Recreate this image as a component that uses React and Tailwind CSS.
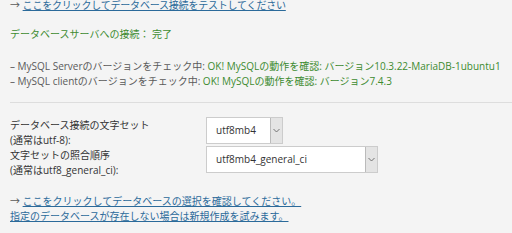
import React from 'react';

const FONT = { fontFamily: '"Open Sans", "Noto Sans CJK JP", sans-serif' };

function Chevron() {
  return (
    <svg width="7" height="5" viewBox="0 0 7 5" fill="none">
      <path d="M0.5 1 L3.5 4 L6.5 1" stroke="#666" strokeWidth="0.9" />
    </svg>
  );
}

function FakeSelect({ value, width }) {
  return (
    <div className={`flex h-[27px] items-stretch border border-[#cccccc] bg-white ${width}`}>
      <div className="flex flex-1 items-center pl-[9px] text-[10px] text-[#333]">{value}</div>
      <div className="flex w-[12px] items-center justify-center border-l border-[#bbbbbb] bg-[#e4e4e4]">
        <Chevron />
      </div>
    </div>
  );
}

export default function App() {
  return (
    <div style={FONT} className="h-[233px] w-[512px] overflow-hidden bg-[#f4f4f4] pl-[10px] text-[10px] leading-[15px] text-[#5a5a5a]">
      <div className="-mt-[2px]">
        → <a className="tracking-[-0.2px] text-[#2b6a9a] underline">ここをクリックしてデータベース接続をテストしてください</a>
      </div>
      <div className="mt-[14px] text-[#3d8b30]">データベースサーバへの接続： 完了</div>
      <div className="mt-[17px]">
        <div>
          – MySQL Serverのバージョンをチェック中: <span className="text-[#3d8b30]">OK! MySQLの動作を確認: バージョン10.3.22-MariaDB-1ubuntu1</span>
        </div>
        <div>
          – MySQL clientのバージョンをチェック中: <span className="text-[#3d8b30]">OK! MySQLの動作を確認: バージョン7.4.3</span>
        </div>
      </div>
      <div className="mt-[13px] border-t border-[#dddddd]" />
      <div className="mt-[15px] flex text-[#333]">
        <div className="w-[196px]">
          <div className="flex h-[30px] flex-col justify-center">
            <div>データベース接続の文字セット</div>
            <div>(通常はutf-8):</div>
          </div>
          <div className="flex h-[30px] flex-col justify-center">
            <div>文字セットの照合順序</div>
            <div>(通常はutf8_general_ci):</div>
          </div>
        </div>
        <div className="-mt-[1px] flex flex-col gap-[2px]">
          <FakeSelect value="utf8mb4" width="w-[77px]" />
          <FakeSelect value="utf8mb4_general_ci" width="w-[172px]" />
        </div>
      </div>
      <div className="mt-[16px]">
        → <a className="text-[#2b6a9a] underline">ここをクリックしてデータベースの選択を確認してください。<br />指定のデータベースが存在しない場合は新規作成を試みます。</a>
      </div>
    </div>
  );
}
